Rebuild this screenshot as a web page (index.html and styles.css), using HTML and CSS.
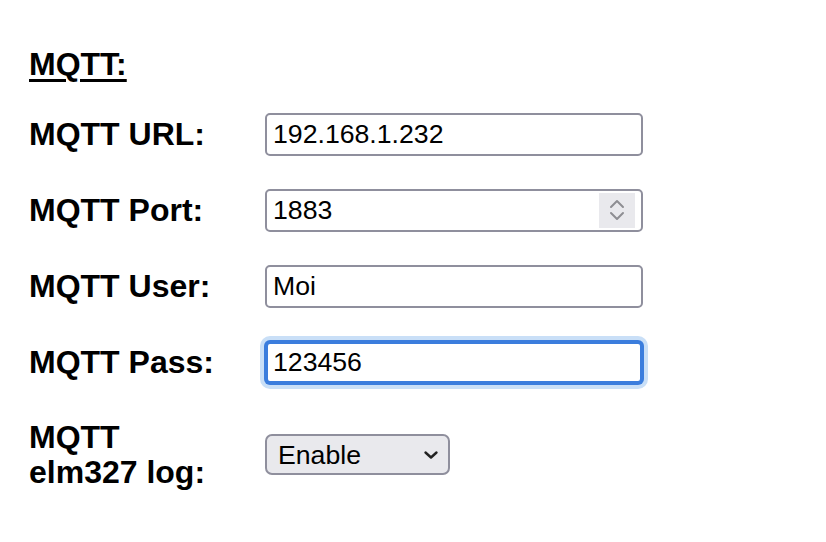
FILE: index.html
```html
<!DOCTYPE html>
<html lang="en">

<head>
    <meta charset="UTF-8">
    <title>MQTT</title>
    <link rel="stylesheet" href="styles.css">
</head>

<body>
    <div class="page">
        <h3 class="section-title">MQTT:</h3>

        <div class="row">
            <label for="mqttUrl">MQTT URL:</label>
            <input type="text" id="mqttUrl" name="mqttUrl" value="192.168.1.232">
        </div>
        <div class="row">
            <label for="mqttPort">MQTT Port:</label>
            <div class="number-box">
                <input type="number" id="mqttPort" name="mqttPort" value="1883">
                <span class="spinner">
                    <svg width="16" height="28" viewBox="0 0 16 28">
                        <path d="M2 11 L8 5 L14 11" fill="none" stroke="#8e8e93" stroke-width="2" stroke-linecap="round" stroke-linejoin="round"/>
                        <path d="M2 17 L8 23 L14 17" fill="none" stroke="#8e8e93" stroke-width="2" stroke-linecap="round" stroke-linejoin="round"/>
                    </svg>
                </span>
            </div>
        </div>
        <div class="row">
            <label for="mqttUser">MQTT User:</label>
            <input type="text" id="mqttUser" name="mqttUser" value="Moi">
        </div>
        <div class="row">
            <label for="mqttPass">MQTT Pass:</label>
            <input type="text" id="mqttPass" name="mqttPass" value="123456" class="focused">
        </div>
        <div class="row last-row">
            <label for="mqttLog">MQTT elm327 log:</label>
            <div class="select-box">
                <select id="mqttLog" name="mqttLog">
                    <option>Enable</option>
                    <option>Disable</option>
                </select>
                <svg class="chevron" width="16" height="10" viewBox="0 0 16 10">
                    <path d="M2.5 2.5 L8 7.5 L13.5 2.5" fill="none" stroke="#222" stroke-width="2.4" stroke-linecap="round" stroke-linejoin="round"/>
                </svg>
            </div>
        </div>
    </div>
</body>

</html>
```

FILE: styles.css
```css
body {
    margin: 0;
    font-family: "Liberation Sans", Arial, Helvetica, sans-serif;
    background-color: #fff;
    color: #000;
}

.page {
    padding: 46px 0 0 29px;
}

.section-title {
    margin: 0 0 14px 0;
    font-size: 32px;
    line-height: 36px;
    font-weight: bold;
    text-decoration: underline;
    text-underline-offset: 4px;
    text-decoration-thickness: 3px;
}

.row {
    display: flex;
    align-items: center;
    padding: 16.5px 0;
}

.last-row {
    margin-top: 3px;
}

label {
    flex: 0 0 200px;
    margin-right: 36px;
    font-size: 32px;
    line-height: 35px;
    font-weight: bold;
}

input {
    box-sizing: border-box;
    width: 378px;
    height: 43px;
    padding: 0 6px;
    border: 2px solid #8f8f9d;
    border-radius: 5px;
    font-family: "Liberation Sans", Arial, Helvetica, sans-serif;
    font-size: 26.67px;
    color: #000;
    background-color: #fff;
    outline: none;
}

input.focused {
    border: 3px solid #3b7ddd;
    padding: 0 5px;
    box-shadow: 0 0 0 1px #3b7ddd, 0 0 0 5px #c9dff7;
}

.number-box {
    box-sizing: border-box;
    display: flex;
    align-items: center;
    width: 378px;
    height: 43px;
    border: 2px solid #8f8f9d;
    border-radius: 5px;
    padding-right: 6px;
}

.number-box input {
    flex: 1 1 auto;
    min-width: 0;
    width: auto;
    height: 39px;
    border: none;
    -moz-appearance: textfield;
}

.number-box input::-webkit-inner-spin-button,
.number-box input::-webkit-outer-spin-button {
    -webkit-appearance: none;
    margin: 0;
}

.spinner {
    flex: 0 0 36px;
    display: flex;
    align-items: center;
    justify-content: center;
    width: 36px;
    height: 35px;
    background-color: #e9e9ed;
}

.select-box {
    display: grid;
    align-items: center;
}

.select-box select,
.select-box .chevron {
    grid-area: 1 / 1;
}

select {
    -webkit-appearance: none;
    appearance: none;
    box-sizing: border-box;
    width: 185px;
    height: 41px;
    padding: 0 0 0 11px;
    border: 2px solid #8f8f9d;
    border-radius: 7px;
    background-color: #e9e9ed;
    font-family: "Liberation Sans", Arial, Helvetica, sans-serif;
    font-size: 26.67px;
    color: #000;
}

.chevron {
    justify-self: end;
    margin-right: 11px;
    pointer-events: none;
}
```
